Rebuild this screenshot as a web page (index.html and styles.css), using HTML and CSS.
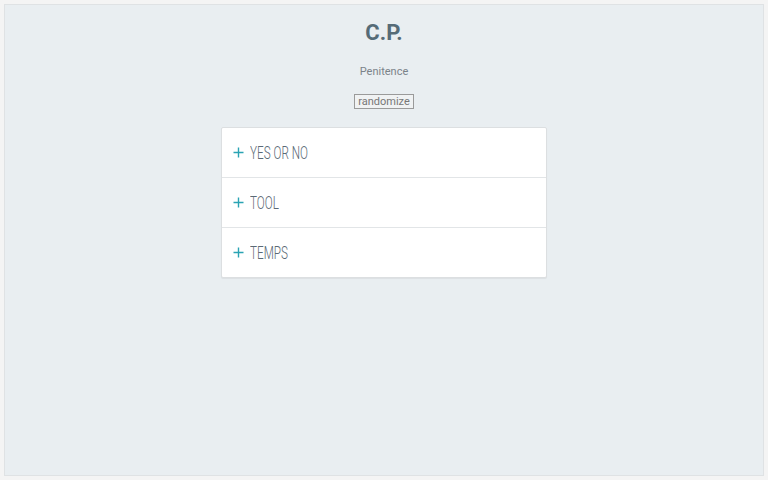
FILE: index.html
```html
<!DOCTYPE html>
<html>
<head>
<meta charset="utf-8">
<link rel="stylesheet" href="styles.css">
</head>
<body>
<div class="panel">
  <h1 class="title">C.P.</h1>
  <p class="subtitle">Penitence</p>
  <div class="actions"><button class="btn">randomize</button></div>
  <div class="card">
    <div class="row"><span class="plus"><svg width="11" height="11" viewBox="0 0 11 11"><path d="M5.5 0.5V10.5M0.5 5.5H10.5" stroke="#2aa3b3" stroke-width="1.4" fill="none"/></svg></span><span class="label">YES OR NO</span></div>
    <div class="row"><span class="plus"><svg width="11" height="11" viewBox="0 0 11 11"><path d="M5.5 0.5V10.5M0.5 5.5H10.5" stroke="#2aa3b3" stroke-width="1.4" fill="none"/></svg></span><span class="label">TOOL</span></div>
    <div class="row"><span class="plus"><svg width="11" height="11" viewBox="0 0 11 11"><path d="M5.5 0.5V10.5M0.5 5.5H10.5" stroke="#2aa3b3" stroke-width="1.4" fill="none"/></svg></span><span class="label">TEMPS</span></div>
  </div>
</div>
</body>
</html>
```
FILE: styles.css
```css
html, body {
  margin: 0;
  padding: 0;
  height: 100%;
}
body {
  background: #f4f4f4;
  padding: 4px;
  box-sizing: border-box;
  font-family: Roboto, "Liberation Sans", sans-serif;
}
.panel {
  height: 472px;
  box-sizing: border-box;
  border: 1px solid #dfe2e4;
  background: #e9eef1;
  display: flex;
  flex-direction: column;
  align-items: center;
}
.title {
  margin: 14px 0 0;
  font-size: 22px;
  line-height: 28px;
  font-weight: 700;
  color: #566b77;
}
.subtitle {
  margin: 18px 0 0;
  font-size: 11px;
  line-height: 14px;
  color: #7b8389;
}
.actions {
  margin-top: 11px;
}
.btn {
  font-family: Roboto, "Liberation Sans", sans-serif;
  font-size: 11px;
  line-height: 13px;
  color: #777;
  background: #f0f2f3;
  border: 1px solid #9a9a9a;
  padding: 0 3px;
  margin: 0;
  border-radius: 0;
}
.card {
  margin-top: 18px;
  width: 326px;
  background: #fff;
  border: 1px solid #dcdfe1;
  border-radius: 2px;
  box-shadow: 0 1px 1px rgba(0,0,0,0.06);
  box-sizing: border-box;
}
.row {
  height: 50px;
  display: flex;
  align-items: center;
  padding-left: 11px;
  border-top: 1px solid #e2e5e7;
  box-sizing: border-box;
}
.row:first-child {
  border-top: none;
  height: 49px;
}
.plus {
  display: flex;
  width: 11px;
  height: 11px;
  margin-right: 6px;
}
.label {
  display: inline-block;
  font-family: Roboto, "Liberation Sans", sans-serif;
  font-size: 18px;
  font-weight: 300;
  color: #5a6975;
  transform: scaleX(0.65);
  transform-origin: left center;
}
```
